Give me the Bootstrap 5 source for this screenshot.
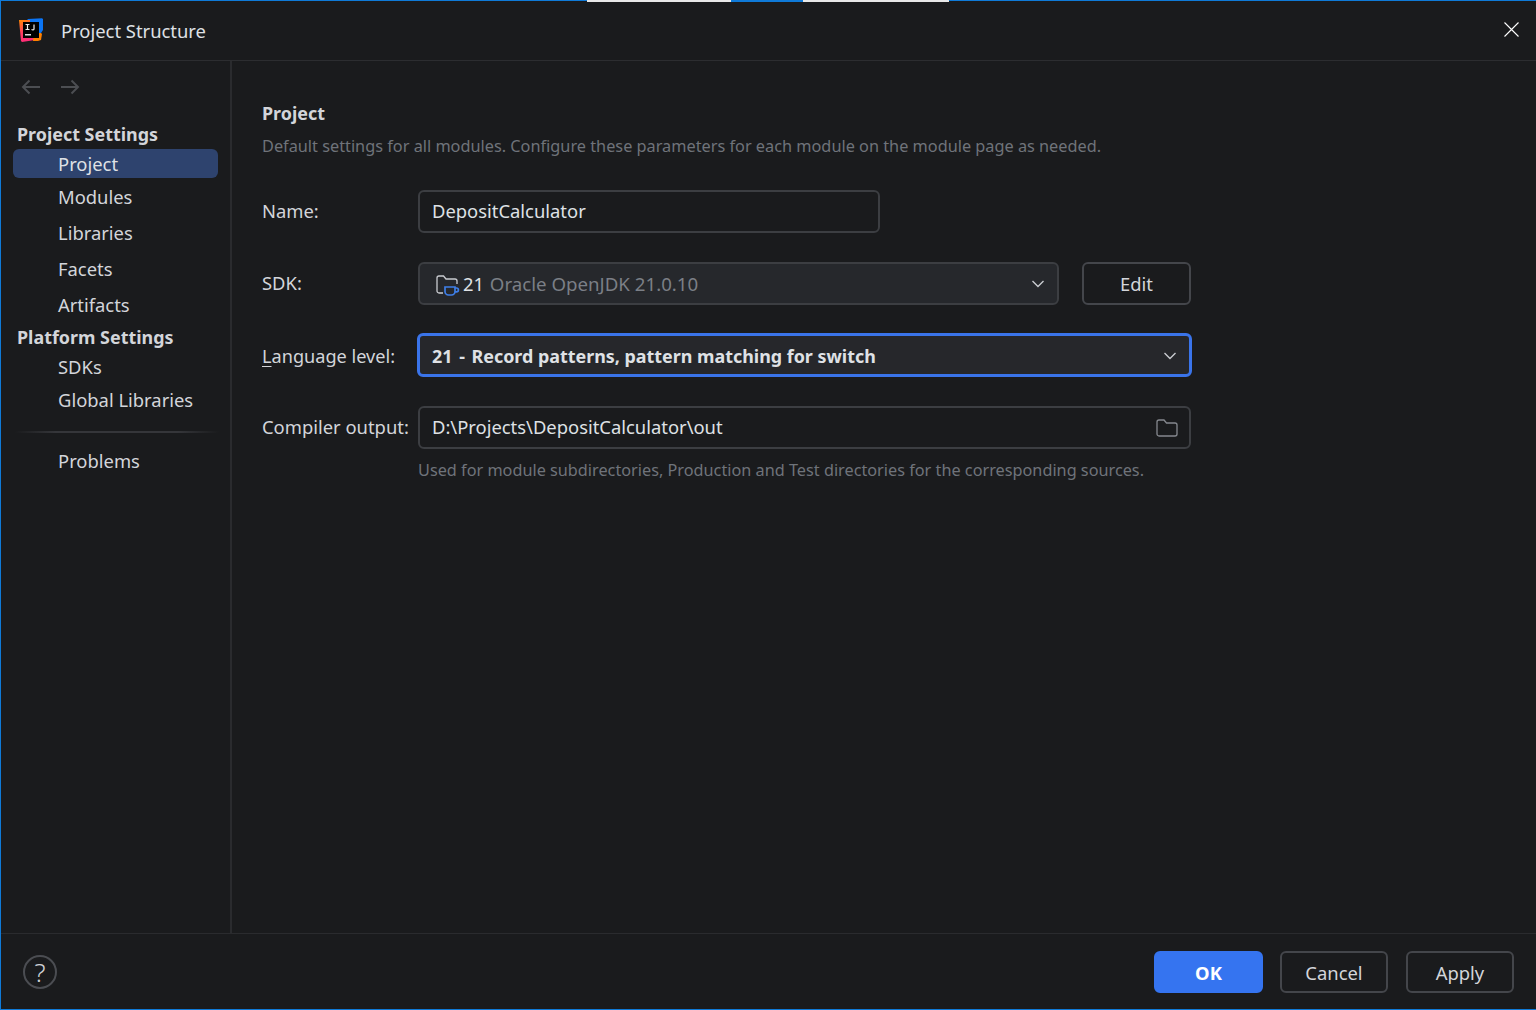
<!doctype html>
<html lang="en">
<head>
<meta charset="utf-8">
<title>Project Structure</title>
<link href="https://cdn.jsdelivr.net/npm/bootstrap@5.3.0/dist/css/bootstrap.min.css" rel="stylesheet">
<style>
html,body{height:100%;margin:0;background:#1a1b1d;overflow:hidden}
body{font-family:"Noto Sans","Open Sans",sans-serif;font-size:18.4px;color:#dfe1e5;line-height:1.2}
.win{width:1536px;height:1010px;background:#1a1b1d;border:solid #0f7ad8;border-width:1px 0 1px 1px;position:relative}
.top-strip{position:absolute;top:-1px;left:586px;width:362px;height:2px;background:#e8e8e8}
.top-strip span{display:block;margin-left:144px;width:72px;height:2px;background:#0f7ad8}
.title-bar{height:60px;border-bottom:1px solid #2c2d30;padding-left:18px}
.title-txt{margin-left:16px;font-size:18.4px;color:#dfe1e5;padding-top:2px}
.close-x{position:absolute;right:17px;top:21px}
.mid{height:872px}
.side{width:231px;border-right:2px solid #2a2b2e;padding:10px 0 0 12px;flex:none}
.arrows{height:32px;padding-left:8px;gap:19px;margin-bottom:16px}
.grp{height:30px;padding-left:4px;padding-top:1px;font-weight:700;color:#d3d5da;font-size:17.9px}
.grp-b{height:29px}
.itm{height:36px;padding-left:45px;color:#d3d5da}
.itm-s{height:30px}
.itm-on{height:29px;width:205px;background:#2e436e;border-radius:6px;margin-bottom:1px;padding-top:1px;color:#dfe1e5}
.sep{height:2px;width:204px;margin:13px 0 10px 2px;background:linear-gradient(90deg,#1a1b1d,#35363a 20%,#35363a 80%,#1a1b1d)}
.pane{padding:36px 0 0 30px;flex:1}
.pane-h{font-weight:700;font-size:17.9px;height:33px;color:#d3d5da}
.hint{color:#6f737a;font-size:16.3px}
.pane-d{height:60px;padding-top:7px}
.lbl{width:156px;flex:none;color:#d3d5da}
.lbl u{text-underline-offset:3px}
.frm{height:43px;margin-bottom:29px}
.frm-out{margin-bottom:12px}
.fld{height:43px;border:2px solid #3c3e42;border-radius:6px;padding:0 12px;background:transparent;color:#dfe1e5}
.fld-name{width:462px}
.fld-sdk{width:641px;background:#26282c;padding-left:16px}
.fld-sdk span{padding-top:2px}
.fld-sdk b{font-weight:400;color:#7b7f86;font-size:18.7px;margin-left:1px}
.ico-sdk{margin-right:3px;margin-top:4px}
.fld-lang{width:775px;height:44px;border:3px solid #3a74ea;background:#26272b;font-weight:700;font-size:17.9px;padding-left:12px}
.fld-lang span{padding-top:3px}
.fld-lang i{font-style:normal;margin:0 2px}
.chev-lang{margin-top:2px}
.fld-out{width:773px;padding-right:11px}
.edit-b{margin-left:23px}
.dlg-btn{height:43px;width:108px;border:2px solid #44464b;border-radius:6px;background:transparent;color:#d3d5da;font-size:18.4px;padding:2px 0 0;line-height:1}
.edit-b.dlg-btn{width:109px}
.dlg-btn:hover{background:transparent;color:#d3d5da;border-color:#44464b}
.ok-btn{background:#3574f0;border-color:#3574f0;color:#fff;font-weight:700;width:109px;margin-right:-1px}
.ok-btn:hover{background:#3574f0;border-color:#3574f0;color:#fff}
.foot{height:76px;border-top:1px solid #2a2b2e;padding:17px 22px 0 22px}
.acts{gap:18px}
.acts .dlg-btn{height:42px}
.help{width:34px;height:34px;border:2px solid #4b4d52;border-radius:50%;color:#cfd1d6;font-size:26px;font-weight:300;line-height:1;margin-top:4px}
.hint-out{margin-left:156px;font-size:16.25px}
.row-lang{height:44px;margin-left:0;margin-bottom:29px;margin-top:-1px}
.row-lang .lbl{width:155px;padding-top:3px;font-size:18.15px}
</style>
</head>
<body>
<div class="win d-flex flex-column">
  <div class="top-strip"><span></span></div>
  <div class="title-bar d-flex align-items-center">
    <svg width="26" height="26" viewBox="0 0 26 26" aria-hidden="true">
      <defs><linearGradient id="lg1" x1="0" y1="0" x2="0.300" y2="1"><stop offset="0" stop-color="#ff8a00"/><stop offset="0.550" stop-color="#ff3d5c"/><stop offset="1" stop-color="#ff2d78"/></linearGradient></defs>
      <path d="M8.500 1L23 0.300 24 1v11l-2 3H9z" fill="#0b75f5"/>
      <path d="M0 2h11v10l5 10-13 2-1-1z" fill="url(#lg1)"/>
      <path d="M15 15h7l1 1-1 6-3 1h-5z" fill="#ff8100"/>
      <rect x="4" y="4" width="16" height="16" fill="#000"/>
      <rect x="6" y="16" width="6" height="1.500" fill="#ddd"/>
      <path d="M6.500 6.500h4M8.500 6.500v5M6.500 11.500h4M15 6.500v4.500c0 1-1.500 1-2.500.5" stroke="#eee" stroke-width="1.200" fill="none"/>
    </svg>
    <span class="title-txt">Project Structure</span>
    <svg class="close-x" width="15" height="15" viewBox="0 0 15 15" aria-hidden="true"><path d="M.5.5l14 14M14.500.5l-14 14" stroke="#fff" stroke-width="1.100"/></svg>
  </div>
  <div class="mid d-flex">
    <div class="side">
      <div class="arrows d-flex align-items-center">
        <svg width="20" height="16" viewBox="0 0 20 16" aria-hidden="true"><path d="M19 8H2M8.500 1.500L2 8l6.500 6.500" stroke="#4c4e52" stroke-width="2" fill="none"/></svg>
        <svg width="20" height="16" viewBox="0 0 20 16" aria-hidden="true"><path d="M1 8h17M11.500 1.500L18 8l-6.500 6.500" stroke="#4c4e52" stroke-width="2" fill="none"/></svg>
      </div>
      <div class="grp d-flex align-items-center">Project Settings</div>
      <div class="itm itm-on d-flex align-items-center">Project</div>
      <div class="itm d-flex align-items-center">Modules</div>
      <div class="itm d-flex align-items-center">Libraries</div>
      <div class="itm d-flex align-items-center">Facets</div>
      <div class="itm d-flex align-items-center">Artifacts</div>
      <div class="grp grp-b d-flex align-items-center">Platform Settings</div>
      <div class="itm itm-s d-flex align-items-center">SDKs</div>
      <div class="itm d-flex align-items-center">Global Libraries</div>
      <div class="sep"></div>
      <div class="itm d-flex align-items-center">Problems</div>
    </div>
    <div class="pane">
      <div class="pane-h d-flex align-items-center">Project</div>
      <div class="pane-d hint d-flex align-items-start">Default settings for all modules. Configure these parameters for each module on the module page as needed.</div>
      <div class="frm d-flex align-items-center">
        <div class="lbl">Name:</div>
        <div class="fld fld-name d-flex align-items-center">DepositCalculator</div>
      </div>
      <div class="frm d-flex align-items-center">
        <div class="lbl">SDK:</div>
        <div class="fld fld-sdk d-flex align-items-center">
          <svg class="ico-sdk" width="24" height="22" viewBox="0 0 24 22" aria-hidden="true"><path d="M7 18H3a2 2 0 0 1-2-2V3a2 2 0 0 1 2-2h4.500L10 4h9a2 2 0 0 1 2 2v3" stroke="#c9cbd0" stroke-width="1.300" fill="none"/><path d="M9 12h10v4.500a3.500 3.500 0 0 1-3.500 3.500h-3A3.500 3.500 0 0 1 9 16.500zM19 13h1.500a1.800 1.800 0 0 1 0 3.800H19" stroke="#3f7fe8" stroke-width="1.700" fill="none"/></svg>
          <span>21&nbsp;<b>Oracle OpenJDK 21.0.10</b></span>
          <svg class="ms-auto" width="14" height="8" viewBox="0 0 14 8" aria-hidden="true"><path d="M1.500 1l5.500 5.500L12.500 1" stroke="#c9cbd0" stroke-width="1.400" fill="none"/></svg>
        </div>
        <button type="button" class="btn dlg-btn edit-b">Edit</button>
      </div>
      <div class="row-lang d-flex align-items-center">
        <div class="lbl"><u>L</u>anguage level:</div>
        <div class="fld fld-lang d-flex align-items-center"><span>21 <i>-</i> Record patterns, pattern matching for switch</span>
          <svg class="ms-auto chev-lang" width="14" height="8" viewBox="0 0 14 8" aria-hidden="true"><path d="M1.500 1l5.500 5.500L12.500 1" stroke="#c9cbd0" stroke-width="1.400" fill="none"/></svg>
        </div>
      </div>
      <div class="frm frm-out d-flex align-items-center">
        <div class="lbl">Compiler output:</div>
        <div class="fld fld-out d-flex align-items-center">D:\Projects\DepositCalculator\out
          <svg class="ms-auto" width="22" height="18" viewBox="0 0 22 18" aria-hidden="true"><path d="M1 3a2 2 0 0 1 2-2h5l2.500 3H19a2 2 0 0 1 2 2v9a2 2 0 0 1-2 2H3a2 2 0 0 1-2-2z" stroke="#85888e" stroke-width="1.300" fill="none"/></svg>
        </div>
      </div>
      <div class="hint hint-out">Used for module subdirectories, Production and Test directories for the corresponding sources.</div>
    </div>
  </div>
  <div class="foot d-flex align-items-start">
    <div class="help d-flex align-items-center justify-content-center">?</div>
    <div class="ms-auto d-flex acts">
      <button type="button" class="btn dlg-btn ok-btn">OK</button>
      <button type="button" class="btn dlg-btn">Cancel</button>
      <button type="button" class="btn dlg-btn">Apply</button>
    </div>
  </div>
</div>
</body>
</html>
